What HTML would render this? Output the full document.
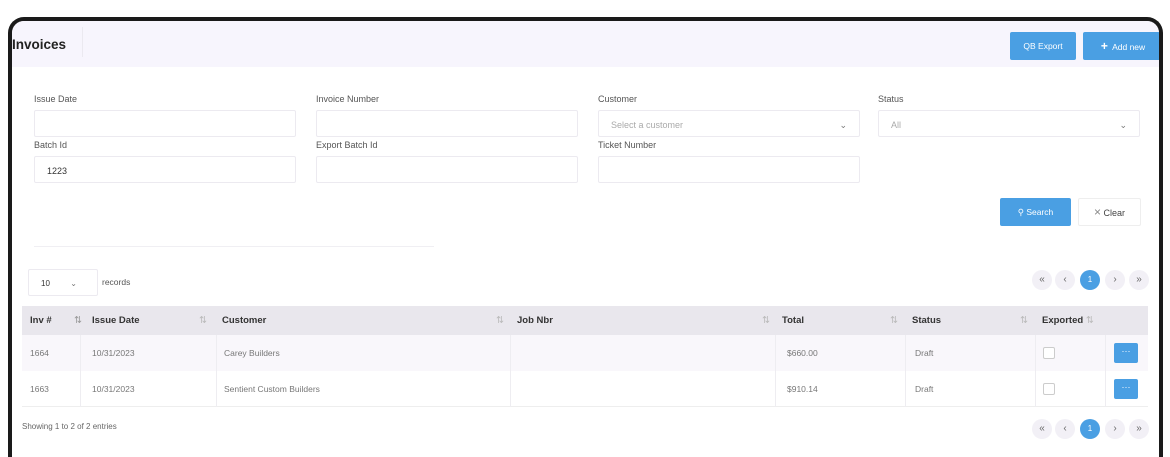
<!DOCTYPE html>
<html><head><style>
*{box-sizing:border-box;margin:0;padding:0}
body{width:1170px;height:439px;background:#fff;font-family:"Liberation Sans",sans-serif;position:relative;overflow:hidden;color:#333}
.frame{position:absolute;left:8px;top:17px;width:1155px;height:440px;border:4px solid #1a1a1a;border-bottom:none;border-radius:16px 16px 0 0;background:#fff;overflow:hidden}
.hdr{position:absolute;left:0;top:0;width:100%;height:46px;background:#f7f5fd}
.a{position:absolute}
.lbl{font-size:9px;color:#555}
.inp{position:absolute;height:27px;border:1px solid #eceaf0;border-radius:2px;background:#fff;font-size:9px;color:#aaa;padding:9px 12px}
.btn{position:absolute;background:#4a9fe3;color:#fff;font-size:8.5px;border-radius:2px;text-align:center}
.th{position:absolute;top:0;font-size:9.5px;font-weight:bold;color:#333;line-height:29px}
.td{position:absolute;font-size:8.5px;color:#777;line-height:36px}
.vl{position:absolute;width:1px;background:#eeedf1}
.pg{position:absolute;width:20px;height:20px;border-radius:50%;background:#f2f0f6;color:#666;font-size:10px;text-align:center;line-height:20px}
.cb{position:absolute;width:12px;height:12px;border:1px solid #ccc;border-radius:2px;background:#fff}
.dots{position:absolute;width:24px;height:20px;background:#4a9fe3;border-radius:2px;color:#fff;font-size:9px;text-align:center;line-height:17px}
</style></head><body>
<div class="frame">
<div class="hdr"></div>
<div class="a" style="left:0;top:16px;font-size:13.5px;font-weight:bold;color:#222">Invoices</div>
<div class="a" style="left:70px;top:6px;width:1px;height:30px;background:#ebe9f0"></div>
<div class="btn" style="left:998px;top:11px;width:66px;height:28px;line-height:28px">QB Export</div>
<div class="btn" style="left:1071px;top:11px;width:80px;height:28px;line-height:28px"><b style="font-size:12px">+</b>&nbsp; Add new</div>

<div class="a lbl" style="left:22px;top:73px">Issue Date</div>
<div class="a lbl" style="left:304px;top:73px">Invoice Number</div>
<div class="a lbl" style="left:586px;top:73px">Customer</div>
<div class="a lbl" style="left:866px;top:73px">Status</div>
<div class="inp" style="left:22px;top:89px;width:262px"></div>
<div class="inp" style="left:304px;top:89px;width:262px"></div>
<div class="inp" style="left:586px;top:89px;width:262px">Select a customer<span style="float:right;color:#777">&#8964;</span></div>
<div class="inp" style="left:866px;top:89px;width:262px">All<span style="float:right;color:#777">&#8964;</span></div>
<div class="a lbl" style="left:22px;top:119px">Batch Id</div>
<div class="a lbl" style="left:304px;top:119px">Export Batch Id</div>
<div class="a lbl" style="left:586px;top:119px">Ticket Number</div>
<div class="inp" style="left:22px;top:135px;width:262px;color:#333">1223</div>
<div class="inp" style="left:304px;top:135px;width:262px"></div>
<div class="inp" style="left:586px;top:135px;width:262px"></div>
<div class="btn" style="left:988px;top:177px;width:71px;height:28px;line-height:28px">&#9906; Search</div>
<div class="a" style="left:1066px;top:177px;width:63px;height:28px;border:1px solid #eee;border-radius:2px;font-size:9px;line-height:26px;text-align:center;color:#444"><span style="color:#888;font-size:12px">×</span> Clear</div>
<div class="a" style="left:22px;top:225px;width:400px;height:1px;background:#f0eff3"></div>

<div class="inp" style="left:16px;top:248px;width:70px;color:#333;font-size:8px">10<span style="float:right;color:#777;margin-right:8px">&#8964;</span></div>
<div class="a" style="left:90px;top:256px;font-size:8.5px;color:#555">records</div>
<div class="pg" style="left:1020px;top:249px">«</div>
<div class="pg" style="left:1043px;top:249px">‹</div>
<div class="pg" style="left:1068px;top:249px;background:#4a9fe3;color:#fff;font-size:8px">1</div>
<div class="pg" style="left:1093px;top:249px">›</div>
<div class="pg" style="left:1117px;top:249px">»</div>

<div class="a" style="left:10px;top:285px;width:1126px;height:29px;background:#e9e7ed">
<div class="th" style="left:8px">Inv #</div><div class="th" style="left:52px;color:#999;font-weight:normal">⇅</div>
<div class="th" style="left:70px">Issue Date</div><div class="th" style="left:177px;color:#bbb;font-weight:normal">⇅</div>
<div class="th" style="left:200px">Customer</div><div class="th" style="left:474px;color:#bbb;font-weight:normal">⇅</div>
<div class="th" style="left:495px">Job Nbr</div><div class="th" style="left:740px;color:#bbb;font-weight:normal">⇅</div>
<div class="th" style="left:760px">Total</div><div class="th" style="left:868px;color:#bbb;font-weight:normal">⇅</div>
<div class="th" style="left:890px">Status</div><div class="th" style="left:998px;color:#bbb;font-weight:normal">⇅</div>
<div class="th" style="left:1020px">Exported <span style="color:#bbb;font-weight:normal">⇅</span></div>
</div>
<div class="a" style="left:10px;top:314px;width:1126px;height:36px;background:#f9f7fb"></div>
<div class="a" style="left:10px;top:350px;width:1126px;height:36px;border-bottom:1px solid #eee"></div>
<div class="vl" style="left:68px;top:314px;height:72px"></div>
<div class="vl" style="left:204px;top:314px;height:72px"></div>
<div class="vl" style="left:498px;top:314px;height:72px"></div>
<div class="vl" style="left:763px;top:314px;height:72px"></div>
<div class="vl" style="left:893px;top:314px;height:72px"></div>
<div class="vl" style="left:1023px;top:314px;height:72px"></div>
<div class="vl" style="left:1093px;top:314px;height:72px"></div>
<div class="td" style="left:18px;top:314px">1664</div><div class="td" style="left:80px;top:314px">10/31/2023</div><div class="td" style="left:212px;top:314px">Carey Builders</div><div class="td" style="left:775px;top:314px">$660.00</div><div class="td" style="left:903px;top:314px">Draft</div>
<div class="td" style="left:18px;top:350px">1663</div><div class="td" style="left:80px;top:350px">10/31/2023</div><div class="td" style="left:212px;top:350px">Sentient Custom Builders</div><div class="td" style="left:775px;top:350px">$910.14</div><div class="td" style="left:903px;top:350px">Draft</div>
<div class="cb" style="left:1031px;top:326px"></div><div class="cb" style="left:1031px;top:362px"></div>
<div class="dots" style="left:1102px;top:322px">···</div><div class="dots" style="left:1102px;top:358px">···</div>
<div class="a" style="left:10px;top:401px;font-size:8px;color:#666">Showing 1 to 2 of 2 entries</div>
<div class="pg" style="left:1020px;top:398px">«</div>
<div class="pg" style="left:1043px;top:398px">‹</div>
<div class="pg" style="left:1068px;top:398px;background:#4a9fe3;color:#fff;font-size:8px">1</div>
<div class="pg" style="left:1093px;top:398px">›</div>
<div class="pg" style="left:1117px;top:398px">»</div>
</div>
</body></html>
